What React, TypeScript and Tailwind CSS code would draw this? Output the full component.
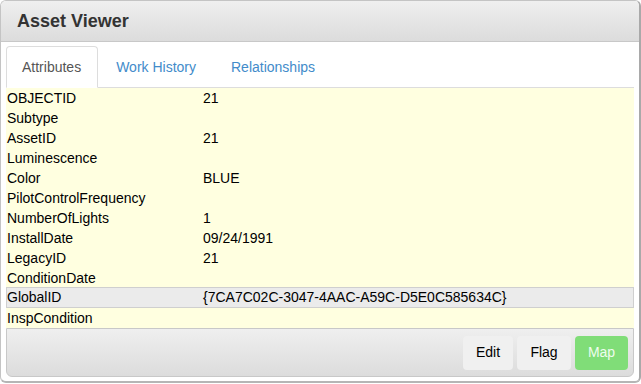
import React, { useState } from 'react';

const rows: [string, string][] = [
  ['OBJECTID', '21'],
  ['Subtype', ''],
  ['AssetID', '21'],
  ['Luminescence', ''],
  ['Color', 'BLUE'],
  ['PilotControlFrequency', ''],
  ['NumberOfLights', '1'],
  ['InstallDate', '09/24/1991'],
  ['LegacyID', '21'],
  ['ConditionDate', ''],
  ['GlobalID', '{7CA7C02C-3047-4AAC-A59C-D5E0C585634C}'],
  ['InspCondition', ''],
];

const tabs = ['Attributes', 'Work History', 'Relationships'];

export default function App() {
  const [active, setActive] = useState('Attributes');

  return (
    <div className="w-[641px] h-[384px] bg-white" style={{ fontFamily: '"Liberation Sans", Arial, sans-serif' }}>
      <div className="w-[641px] h-[383px] flex flex-col border border-[#c4c4c4] border-r-2 border-r-[#a9a9a9] border-b-2 border-b-[#b5b5b5] rounded-[6px] overflow-hidden">
        {/* header */}
        <div className="h-[41px] shrink-0 flex items-center pl-4 border-b border-[#c8c8c8] bg-gradient-to-b from-[#efefef] to-[#dcdcdc]">
          <h1 className="text-[18px] font-bold text-[#333]">Asset Viewer</h1>
        </div>

        <div className="flex-1 flex flex-col px-[5px] pt-1 pb-[4px]">
          {/* tabs */}
          <div className="flex h-[42px] border-b border-[#ddd] shrink-0">
            {tabs.map((t) => (
              <button
                key={t}
                onClick={() => setActive(t)}
                className={
                  t === active
                    ? 'h-[42px] pl-[15px] pr-[16px] mr-[2px] pt-px text-[14px] text-[#555] bg-white border border-[#ddd] border-b-white rounded-t-[4px]'
                    : 'h-[41px] pl-[15px] pr-[16px] mr-[2px] pt-px text-[14px] text-[#428bca] border border-transparent'
                }
              >
                {t}
              </button>
            ))}
          </div>

          {/* attributes */}
          <div className="bg-[#ffffe0] flex flex-col h-[240px] shrink-0">
            {rows.map(([k, v]) =>
              k === 'GlobalID' ? (
                <div key={k} className="flex h-[21px] -mt-px items-center bg-[#ebebeb] border border-[#cfcfcf] text-[14px] text-black">
                  <div className="w-[196px]">{k}</div>
                  <div>{v}</div>
                </div>
              ) : (
                <div key={k} className="flex h-[20px] items-center text-[14px] text-black">
                  <div className="w-[197px] pl-px">{k}</div>
                  <div>{v}</div>
                </div>
              )
            )}
          </div>

          {/* footer */}
          <div className="flex-1 flex items-center justify-end gap-1 pr-[5px] border border-[#c8c8c8] rounded-b-[6px] bg-gradient-to-b from-[#efefef] to-[#dcdcdc]">
            <button className="h-[34px] w-[50px] rounded-[4px] bg-[#f0f0f0] text-[14px] text-black">Edit</button>
            <button className="h-[34px] w-[54px] rounded-[4px] bg-[#f0f0f0] text-[14px] text-black">Flag</button>
            <button className="h-[34px] w-[53px] rounded-[4px] bg-[#80dd78] text-[14px] text-[#eefcee]">Map</button>
          </div>
        </div>
      </div>
    </div>
  );
}
